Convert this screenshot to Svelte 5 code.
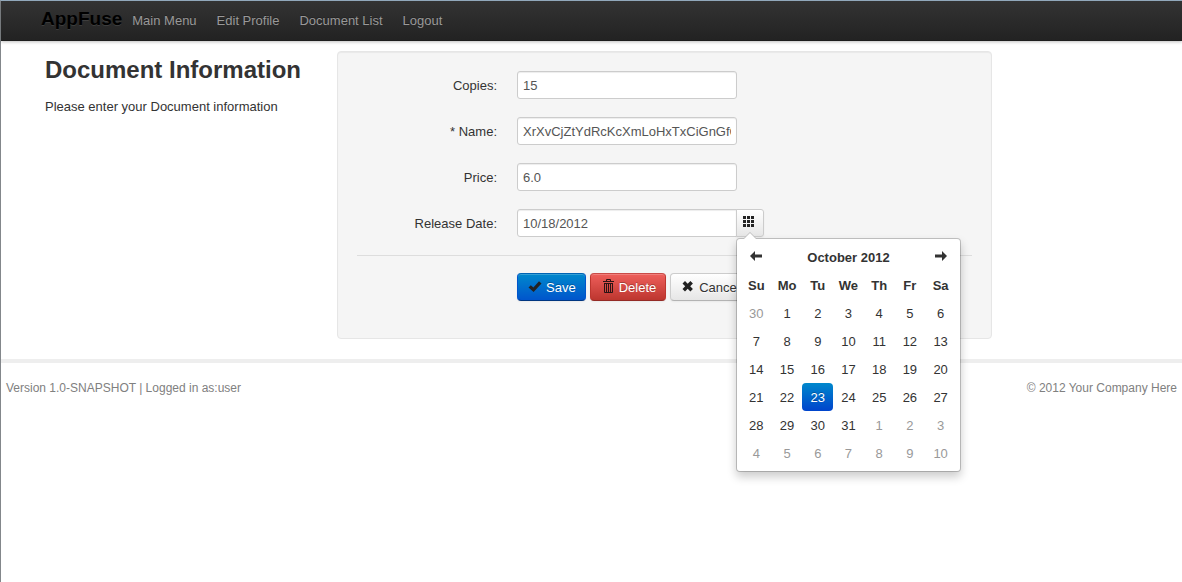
<script lang="ts">
	const links = ['Main Menu', 'Edit Profile', 'Document List', 'Logout'];
	const weekdays = ['Su', 'Mo', 'Tu', 'We', 'Th', 'Fr', 'Sa'];

	let copies = $state('15');
	let name = $state('XrXvCjZtYdRcKcXmLoHxTxCiGnGfGtBqWs');
	let price = $state('6.0');
	let releaseDate = $state('10/18/2012');
	let showPicker = $state(true);

	let month = $state(new Date(2012, 9, 1));
	let active = $state(new Date(2012, 9, 23).getTime());

	const title = $derived(month.toLocaleDateString('en-US', { month: 'long', year: 'numeric' }));

	// Six full weeks, starting on the Sunday on or before the 1st
	const weeks = $derived.by(() => {
		const year = month.getFullYear();
		const index = month.getMonth();
		const start = 1 - month.getDay();
		return Array.from({ length: 6 }, (_, w) =>
			Array.from({ length: 7 }, (_, d) => new Date(year, index, start + w * 7 + d))
		);
	});

	function moveMonth(step: number) {
		month = new Date(month.getFullYear(), month.getMonth() + step, 1);
	}

	function pick(day: Date) {
		active = day.getTime();
		const mm = String(day.getMonth() + 1).padStart(2, '0');
		const dd = String(day.getDate()).padStart(2, '0');
		releaseDate = `${mm}/${dd}/${day.getFullYear()}`;
	}
</script>

<div class="page">
	<nav class="navbar">
		<a class="brand" href="#home">AppFuse</a>
		{#each links as link}
			<a class="nav-link" href="#{link.toLowerCase().replace(' ', '-')}">{link}</a>
		{/each}
	</nav>

	<main class="content">
		<div class="intro">
			<h2>Document Information</h2>
			<p>Please enter your Document information</p>
		</div>

		<form class="well" onsubmit={(e) => e.preventDefault()}>
			<div class="control-group">
				<label for="copies">Copies:</label>
				<input id="copies" type="text" bind:value={copies} />
			</div>
			<div class="control-group">
				<label for="name">* Name:</label>
				<input id="name" type="text" bind:value={name} />
			</div>
			<div class="control-group">
				<label for="price">Price:</label>
				<input id="price" type="text" bind:value={price} />
			</div>
			<div class="control-group">
				<label for="releaseDate">Release Date:</label>
				<input id="releaseDate" class="joined" type="text" bind:value={releaseDate} />
				<div class="append">
					<button
						type="button"
						class="btn add-on"
						aria-label="Choose a date"
						onclick={() => (showPicker = !showPicker)}
					>
						<svg width="14" height="14" viewBox="0 0 14 14" fill="#222">
							<path d="M0 1h3v3H0zM4 1h3v3H4zM8 1h3v3H8zM0 5h3v3H0zM4 5h3v3H4zM8 5h3v3H8zM0 9h3v3H0zM4 9h3v3H4zM8 9h3v3H8z" />
						</svg>
					</button>

					{#if showPicker}
						<div class="datepicker">
							<table>
								<thead>
									<tr>
										<th>
											<button type="button" aria-label="Previous month" onclick={() => moveMonth(-1)}>
												<svg width="14" height="14" viewBox="0 0 14 14" fill="#333">
													<path d="M1 7l5-5v3.4h7v3.2H6V12z" />
												</svg>
											</button>
										</th>
										<th colspan="5">{title}</th>
										<th>
											<button type="button" aria-label="Next month" onclick={() => moveMonth(1)}>
												<svg width="14" height="14" viewBox="0 0 14 14" fill="#333">
													<path d="M13 7L8 2v3.4H1v3.2h7V12z" />
												</svg>
											</button>
										</th>
									</tr>
									<tr>
										{#each weekdays as weekday}
											<th>{weekday}</th>
										{/each}
									</tr>
								</thead>
								<tbody>
									{#each weeks as week}
										<tr>
											{#each week as day}
												<td>
													<button
														type="button"
														class:other={day.getMonth() !== month.getMonth()}
														class:active={day.getTime() === active}
														onclick={() => pick(day)}
													>
														{day.getDate()}
													</button>
												</td>
											{/each}
										</tr>
									{/each}
								</tbody>
							</table>
						</div>
					{/if}
				</div>
			</div>

			<div class="form-actions">
				<button type="submit" class="btn primary">
					<svg width="14" height="14" viewBox="0 0 14 14" fill="#222">
						<path d="M0.5 8.5l2.3-2.3 2.6 2.4L11 2.3 13.5 4.5 5.6 12.9z" />
					</svg>
					Save
				</button>
				<button type="button" class="btn danger">
					<svg width="14" height="14" viewBox="0 0 14 14" fill="none" stroke="#2b1414">
						<path d="M5.5 2V.5h4V2M2 2.5h11M3.5 4v9.5h8V4M3 4.5h9M5.5 5v8M7.5 5v8M9.5 5v8" />
					</svg>
					Delete
				</button>
				<button type="button" class="btn">
					<svg width="14" height="14" viewBox="0 0 14 14" fill="#222">
						<path d="M1.5 4.5L4 2 6.7 4.7 9.4 2 11.9 4.5 9.2 7.2l2.7 2.7-2.5 2.5-2.7-2.7L4 12.4 1.5 9.9l2.7-2.7z" />
					</svg>
					Cancel
				</button>
			</div>
		</form>
	</main>

	<footer>
		<span>Version 1.0-SNAPSHOT | Logged in as:user</span>
		<span>© 2012 Your Company Here</span>
	</footer>
</div>

<style>
	:global(body) {
		margin: 0;
		background: #fff;
	}

	.page {
		box-sizing: border-box;
		min-height: 100vh;
		border-top: 1px solid #98b0c4;
		border-left: 1px solid #83878b;
		font-family: "Liberation Sans", Arial, sans-serif;
		font-size: 13px;
		line-height: 18px;
		color: #333;
	}

	.navbar {
		display: flex;
		align-items: center;
		height: 40px;
		padding-left: 40px;
		background: linear-gradient(to bottom, #333, #222);
		box-shadow: 0 1px 3px rgba(0, 0, 0, 0.25), inset 0 -1px 0 rgba(0, 0, 0, 0.1);
	}

	.brand {
		font-size: 19px;
		font-weight: bold;
		line-height: 36px;
		padding-bottom: 4px;
		color: #000;
		text-decoration: none;
		text-shadow: 0 1px 0 rgba(255, 255, 255, 0.1), 0 0 30px rgba(255, 255, 255, 0.125);
	}

	.nav-link {
		padding: 0 10px;
		color: #999;
		text-decoration: none;
		text-shadow: 0 -1px 0 rgba(0, 0, 0, 0.25);
	}

	.nav-link:hover {
		color: #fff;
	}

	.content {
		display: flex;
		align-items: flex-start;
		max-width: 947px;
		padding: 10px 44px 20px;
	}

	.intro {
		flex: 1;
		padding-top: 1px;
	}

	h2 {
		margin: 0;
		font-size: 24px;
		line-height: 36px;
	}

	p {
		margin: 10px 0 0;
	}

	.well {
		box-sizing: border-box;
		flex: 0 1 655px;
		padding: 19px;
		background: #f5f5f5;
		border: 1px solid #e6e6e6;
		border-radius: 4px;
		box-shadow: inset 0 1px 1px rgba(0, 0, 0, 0.05);
	}

	.control-group {
		display: flex;
		align-items: center;
		margin-bottom: 18px;
	}

	label {
		width: 140px;
		margin-right: 20px;
		padding-top: 2px;
		text-align: right;
	}

	input {
		box-sizing: border-box;
		width: 220px;
		height: 28px;
		padding: 4px 5px;
		font: inherit;
		color: #555;
		background: #fff;
		border: 1px solid #ccc;
		border-radius: 3px;
		box-shadow: inset 0 1px 1px rgba(0, 0, 0, 0.075);
	}

	input.joined {
		border-radius: 3px 0 0 3px;
	}

	.append {
		position: relative;
		margin-left: -1px;
	}

	.btn {
		box-sizing: border-box;
		display: flex;
		align-items: center;
		gap: 4px;
		height: 28px;
		padding: 2px 9px 0 10px;
		font: inherit;
		color: #333;
		text-shadow: 0 1px 1px rgba(255, 255, 255, 0.75);
		background: linear-gradient(to bottom, #fff, #e6e6e6);
		border: 1px solid #ccc;
		border-bottom-color: #b3b3b3;
		border-radius: 4px;
		box-shadow: inset 0 1px 0 rgba(255, 255, 255, 0.2), 0 1px 2px rgba(0, 0, 0, 0.05);
		cursor: pointer;
	}

	.btn svg {
		margin-bottom: 4px;
	}

	.add-on {
		padding: 2px 6px 0;
		border-bottom-color: #ccc;
		border-radius: 0 3px 3px 0;
	}

	.primary {
		color: #fff;
		text-shadow: 0 -1px 0 rgba(0, 0, 0, 0.25);
		background: linear-gradient(to bottom, #0088cc, #0055cc);
		border-color: #0064b4 #0055cc #003580;
	}

	.danger {
		color: #fff;
		text-shadow: 0 -1px 0 rgba(0, 0, 0, 0.25);
		background: linear-gradient(to bottom, #ee5f5b, #bd362f);
		border-color: #c94b47 #bd362f #942a25;
	}

	.form-actions {
		display: flex;
		gap: 4px;
		padding: 17px 0 18px 160px;
		border-top: 1px solid #ddd;
	}

	.datepicker {
		position: absolute;
		top: 29px;
		left: 0;
		z-index: 10;
		box-sizing: border-box;
		width: 225px;
		padding: 4px;
		background: #fff;
		border: 1px solid #ccc;
		border-color: rgba(0, 0, 0, 0.2);
		background-clip: padding-box;
		border-radius: 4px;
		box-shadow: 0 5px 10px rgba(0, 0, 0, 0.2);
	}

	.datepicker::before,
	.datepicker::after {
		content: '';
		position: absolute;
		border-style: solid;
		border-color: transparent;
		border-top: 0;
	}

	.datepicker::before {
		top: -7px;
		left: 6px;
		border-width: 0 7px 7px;
		border-bottom-color: #bbb;
	}

	.datepicker::after {
		top: -6px;
		left: 7px;
		border-width: 0 6px 6px;
		border-bottom-color: #fff;
	}

	table {
		width: 100%;
		table-layout: fixed;
		border-collapse: collapse;
	}

	th,
	td {
		box-sizing: border-box;
		height: 28px;
		padding: 0;
		text-align: center;
	}

	th {
		padding-top: 2px;
	}

	td button,
	th button {
		display: flex;
		align-items: center;
		justify-content: center;
		width: 100%;
		height: 28px;
		padding: 2px 0 0;
		font: inherit;
		color: inherit;
		background: none;
		border: 0;
		border-radius: 4px;
		cursor: pointer;
	}

	th button {
		height: 26px;
		padding: 0 0 4px;
	}

	td button:hover,
	th button:hover {
		background: #eee;
	}

	td .other {
		color: #999;
	}

	td .active,
	td .active:hover {
		color: #fff;
		text-shadow: 0 -1px 0 rgba(0, 0, 0, 0.25);
		background: linear-gradient(to bottom, #0088cc, #0044cc);
	}

	footer {
		display: flex;
		justify-content: space-between;
		padding: 16px 5px;
		font-size: 12px;
		color: #808080;
		border-top: 4px solid #eee;
	}
</style>
